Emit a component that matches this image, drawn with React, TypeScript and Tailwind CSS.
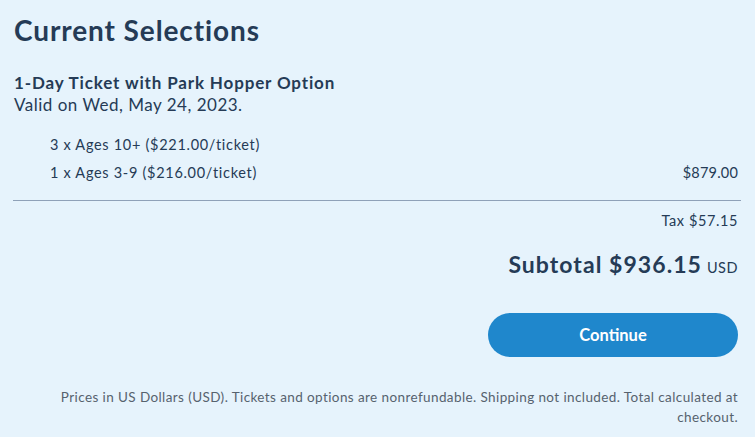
import React from "react";

export default function App() {
  return (
    <div className="w-[755px] h-[437px] bg-[#e6f3fc] text-[#253b56] overflow-hidden" style={{ fontFamily: "Lato, 'Noto Sans', sans-serif" }}>
      <div className="pl-[14px] pr-[17px] pt-[14px]">
        <h1 className="text-[28px] leading-[32px] font-bold tracking-[0.9px]">Current Selections</h1>
        <div className="mt-[26px]">
          <div className="text-[17px] leading-[22px] font-bold tracking-[0.85px]">1-Day Ticket with Park Hopper Option</div>
          <div className="text-[17px] leading-[22px] tracking-[0.5px]">Valid on Wed, May 24, 2023.</div>
        </div>
        <div className="mt-[15px] pl-[36px] text-[14.5px] leading-[28px] tracking-[0.7px]">
          <div>3 x Ages 10+ ($221.00/ticket)</div>
          <div className="flex justify-between">
            <span>1 x Ages 3-9 ($216.00/ticket)</span>
            <span className="tracking-[0.2px]">$879.00</span>
          </div>
        </div>
        <div className="mt-[13px] h-px bg-[#8fa1b8] -ml-px -mr-[3px]" />
        <div className="mt-[10px] text-right text-[14.5px] leading-[20px] tracking-[0.6px]">Tax $57.15</div>
        <div className="mt-[18px] text-right flex justify-end items-baseline gap-[5px]">
          <span className="text-[23px] leading-[30px] font-bold tracking-[1.05px]">Subtotal $936.15</span>
          <span className="text-[14.5px] tracking-[0.5px]">USD</span>
        </div>
        <div className="mt-[34px] flex justify-end">
          <button className="w-[250px] h-[44px] rounded-full bg-[#1f87cc] text-white text-[16.5px] font-bold">Continue</button>
        </div>
        <p className="mt-[30px] ml-[44px] text-right text-[13.5px] leading-[20px] tracking-[0.4px] text-[#56626e]">
          Prices in US Dollars (USD). Tickets and options are nonrefundable. Shipping not included. Total calculated at checkout.
        </p>
      </div>
    </div>
  );
}
